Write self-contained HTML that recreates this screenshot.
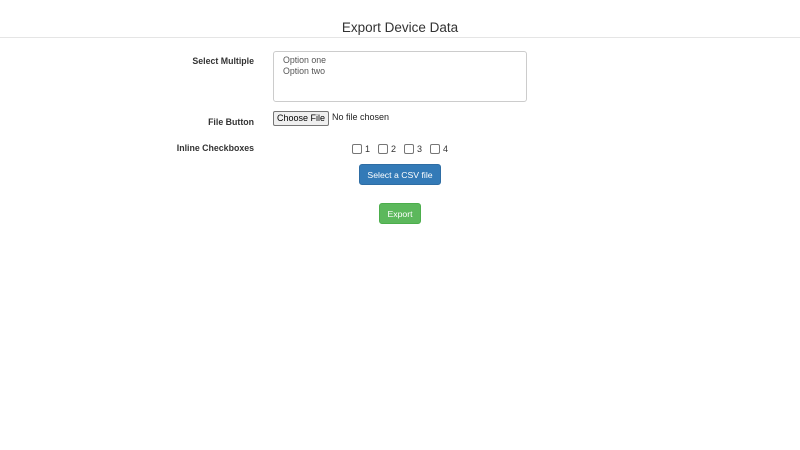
<!DOCTYPE html>
<html><head><meta charset="utf-8"><style>
body{margin:0;width:800px;height:450px;background:#fff;font-family:"Liberation Sans",sans-serif;color:#333;position:relative;overflow:hidden}
.a{position:absolute}
h1{position:absolute;left:0;width:800px;top:20px;margin:0;text-align:center;font-size:13.5px;font-weight:normal;color:#333}
.hr{position:absolute;left:0;top:37px;width:800px;height:1px;background:#e5e5e5}
.lbl{position:absolute;right:546px;font-size:8.8px;font-weight:bold;color:#333}
.sel{left:273px;top:51px;border:1px solid #ccc;border-radius:3px;font-size:8.8px;color:#555;padding:3px 0 0 9px;box-sizing:border-box;width:254px;height:51px;line-height:10.5px}
.fb{left:273px;top:111px;width:54px;height:13px;border:1px solid #767676;border-radius:2px;background:#efefef;font-size:9px;line-height:13px;text-align:center;color:#000}
.cb{width:8px;height:8px;border:1px solid #767676;border-radius:2px;top:144px;background:#fff}
.n{top:144px;font-size:9px;color:#333}
.btn{border-radius:3px;font-size:8.7px;color:#fff;text-align:center;box-sizing:border-box}
</style></head><body>
<h1>Export Device Data</h1>
<div class="hr"></div>
<div class="lbl" style="top:56px">Select Multiple</div>
<div class="a sel">Option one<br>Option two</div>
<div class="lbl" style="top:117px">File Button</div>
<div class="a fb">Choose File</div>
<div class="a" style="left:332px;top:112px;font-size:9px;color:#222">No file chosen</div>
<div class="lbl" style="top:143px">Inline Checkboxes</div>
<div class="a cb" style="left:352px"></div><div class="a n" style="left:365px">1</div>
<div class="a cb" style="left:378px"></div><div class="a n" style="left:391px">2</div>
<div class="a cb" style="left:404px"></div><div class="a n" style="left:417px">3</div>
<div class="a cb" style="left:430px"></div><div class="a n" style="left:443px">4</div>
<div class="a btn" style="left:359px;top:164px;width:82px;height:21px;line-height:20px;background:#337ab7;border:1px solid #2e6da4">Select a CSV file</div>
<div class="a btn" style="left:379px;top:203px;width:42px;height:21px;line-height:20px;background:#5cb85c;border:1px solid #4cae4c">Export</div>
</body></html>
